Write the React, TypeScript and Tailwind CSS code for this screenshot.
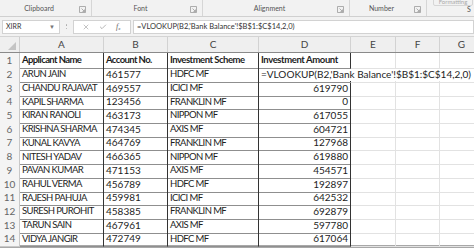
import { Check, X } from 'lucide-react';

const rows: [string, string, string, string | null][] = [
  ['ARUN JAIN', '461577', 'HDFC MF', null],
  ['CHANDU RAJAVAT', '469557', 'ICICI MF', '619790'],
  ['KAPIL SHARMA', '123456', 'FRANKLIN MF', '0'],
  ['KIRAN RANOLI', '463173', 'NIPPON MF', '617055'],
  ['KRISHNA SHARMA', '474345', 'AXIS MF', '604721'],
  ['KUNAL KAVYA', '464769', 'FRANKLIN MF', '127968'],
  ['NITESH YADAV', '466365', 'NIPPON MF', '619880'],
  ['PAVAN KUMAR', '471153', 'AXIS MF', '454571'],
  ['RAHUL VERMA', '456789', 'HDFC MF', '192897'],
  ['RAJESH PAHUJA', '459981', 'ICICI MF', '642532'],
  ['SURESH PUROHIT', '458385', 'FRANKLIN MF', '692879'],
  ['TARUN SAIN', '467961', 'AXIS MF', '597780'],
  ['VIDYA JANGIR', '472749', 'HDFC MF', '617064'],
];

const formula = "=VLOOKUP(B2,'Bank Balance'!$B$1:$C$14,2,0)";

const cols = 'grid grid-cols-[20px_84px_64px_91px_92px_45px_44px_44px]';
const cell = 'flex items-center border-r border-b border-r-[#333] border-b-[#8f8f8f] whitespace-nowrap';

function Launcher() {
  return (
    <svg width="7" height="7" viewBox="0 0 7 7" className="absolute right-[5px] top-[6px]">
      <path d="M0.5 0.5h6v6h-6z" fill="none" stroke="#9a9a9a" strokeWidth="0.8" />
      <path d="M2.5 2.5l3 3M5.5 3.5v2h-2" fill="none" stroke="#9a9a9a" strokeWidth="0.8" />
    </svg>
  );
}

function Group({ label, w }: { label: string; w: string }) {
  return (
    <div className={`relative h-full border-r border-[#d6d6d6] ${w}`}>
      <div className="absolute inset-y-0 left-0 right-[13px] flex items-center justify-center text-[7px] text-[#555]">{label}</div>
      <Launcher />
    </div>
  );
}

export default function App() {
  const grid = 'border-r border-b border-[#e2e2e2]';
  return (
    <div className="w-[474px] h-[249px] overflow-hidden bg-white font-['Lato',sans-serif] text-[#1d1d1d]">
      {/* ribbon group labels */}
      <div className="relative flex h-[17px] bg-[#f2f2f2] border-b border-[#d0d0d0]">
        <Group label="Clipboard" w="w-[92px]" />
        <Group label="Font" w="w-[111px]" />
        <Group label="Alignment" w="w-[147px]" />
        <Group label="Number" w="w-[77px]" />
        <div className="relative flex-1">
          <div className="absolute left-[6px] -top-[4px] w-[40px] h-[10px] border border-[#d6d6d6] rounded-[2px] text-[6px] text-[#aaa] text-center leading-[9px]">Formatting</div>
          <div className="absolute left-[40px] top-[4px] text-[7px] text-[#555]">S</div>
        </div>
      </div>

      {/* formula bar */}
      <div className="flex items-center h-[20px] bg-[#f2f2f2] border-b border-[#d4d4d4]">
        <div className="ml-[2px] flex items-center justify-between w-[58px] h-[14px] bg-white border border-[#d2d2d2] pl-[3px] pr-[4px] text-[7px] text-[#333]">
          <span>XIRR</span>
          <span className="text-[6px] text-[#777]">▼</span>
        </div>
        <div className="w-[13px] flex flex-col items-center gap-[2px]">
          <span className="w-[1.5px] h-[1.5px] bg-[#aaa] rounded-full" />
          <span className="w-[1.5px] h-[1.5px] bg-[#aaa] rounded-full" />
        </div>
        <div className="flex items-center gap-[9px] w-[58px] h-[14px] bg-white border border-[#d2d2d2] pl-[8px]">
          <X size={8} color="#888" strokeWidth={1.5} />
          <Check size={8} color="#777" strokeWidth={1.6} />
          <span className="font-['Liberation_Serif',serif] italic text-[8px] text-[#666] leading-none">
            f<sub className="text-[5px]">x</sub>
          </span>
        </div>
        <div className="ml-[2px] flex-1 h-[14px] bg-white border border-[#d2d2d2] pl-[3px] text-[7.5px] text-[#333] flex items-center whitespace-nowrap">
          {formula}
        </div>
      </div>

      {/* column headers */}
      <div className={`${cols} h-[16px] bg-[#efefef] border-b border-[#8a8a8a] text-[10px] text-[#444]`}>
        <div className="relative border-r border-[#cfcfcf]">
          <svg width="8" height="8" viewBox="0 0 8 8" className="absolute right-[3px] bottom-[2px]">
            <path d="M8 0V8H0Z" fill="#c4c4c4" />
          </svg>
        </div>
        {['A', 'B', 'C', 'D', 'E', 'F', 'G'].map((c) => (
          <div key={c} className="flex items-center justify-center border-r border-[#d2d2d2]">{c}</div>
        ))}
      </div>

      {/* rows */}
      <div className="text-[10px]">
        <div className={`${cols} h-[14px]`}>
          <div className="flex items-center justify-center bg-[#f4f4f4] border-r border-b border-[#c8c8c8] text-[#666]">1</div>
          <div className={`${cell} pl-[2px] font-bold text-[9.5px] tracking-[-0.6px]`}>Applicant Name</div>
          <div className={`${cell} pl-[2px] font-bold text-[9.5px] tracking-[-0.6px]`}>Account No.</div>
          <div className={`${cell} pl-[2px] font-bold text-[9.5px] tracking-[-0.5px] overflow-hidden`}>Investment Scheme</div>
          <div className={`${cell} pl-[2px] font-bold text-[9.5px] tracking-[-0.4px]`}>Investment Amount</div>
          <div className={grid} />
          <div className={grid} />
          <div className={grid} />
        </div>
        {rows.map(([name, acc, scheme, amt], i) => (
          <div key={name} className={`${cols} h-[13.7px]`}>
            <div className="flex items-center justify-center bg-[#f4f4f4] border-r border-b border-[#c8c8c8] text-[#666]">{i + 2}</div>
            <div className={`${cell} pl-[2px] text-[9.5px] tracking-[-0.6px]`}>{name}</div>
            <div className={`${cell} pl-[2px]`}>{acc}</div>
            <div className={`${cell} pl-[2px] text-[9.5px] tracking-[-0.6px]`}>{scheme}</div>
            {amt === null ? (
              <div className="relative z-10 min-w-0 flex items-center border-b border-[#8f8f8f]">
                <span className="pl-[2px] whitespace-nowrap">{formula}</span>
              </div>
            ) : (
              <div className={`${cell} justify-end pr-[2px]`}>{amt}</div>
            )}
            <div className={amt === null ? 'border-b border-[#e2e2e2]' : grid} />
            <div className={amt === null ? 'border-b border-[#e2e2e2]' : grid} />
            <div className={grid} />
          </div>
        ))}
      </div>
      <div className="h-[3px] bg-[#a8a8a8]" />
    </div>
  );
}
